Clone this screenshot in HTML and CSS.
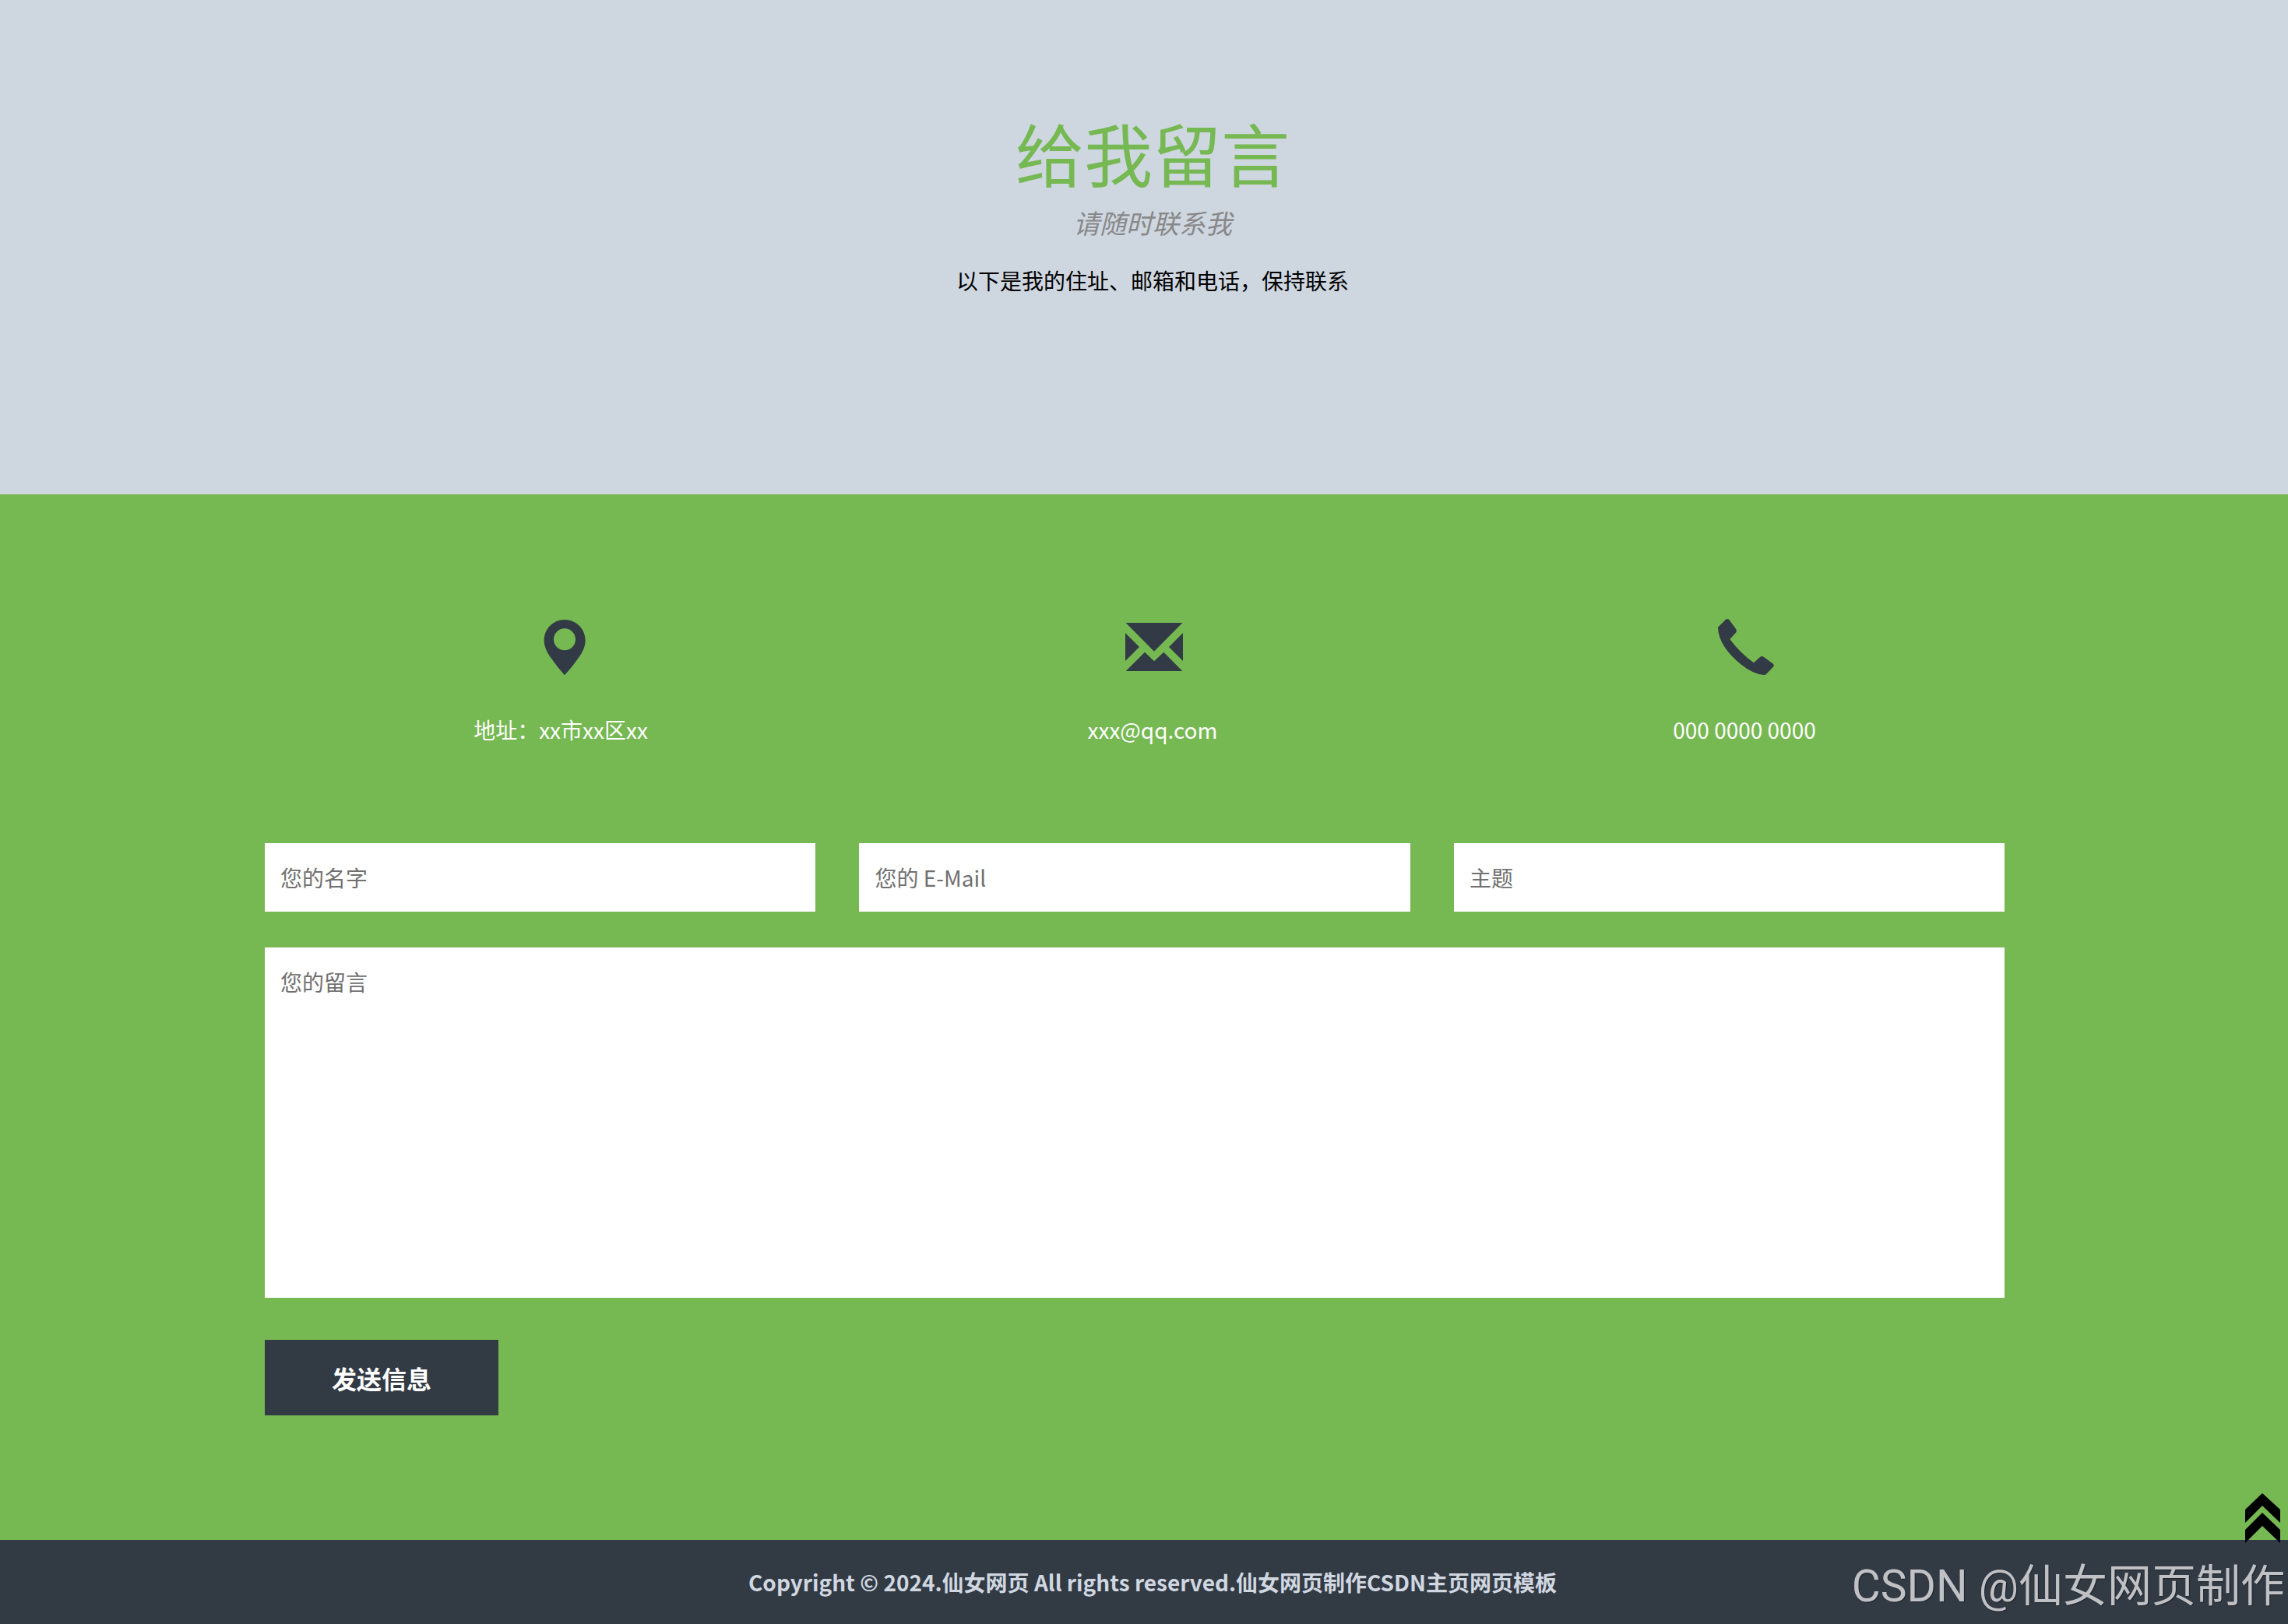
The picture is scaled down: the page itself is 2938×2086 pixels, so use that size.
FILE: index.html
```
<!DOCTYPE html>
<html lang="zh-CN">
<head>
<meta charset="UTF-8">
<meta name="viewport" content="width=device-width, initial-scale=1.0">
<title>给我留言</title>
<link rel="stylesheet" href="styles.css">
</head>
<body id="top">
<header class="intro">
    <div class="container">
        <h1>给我留言</h1>
        <h2>请随时联系我</h2>
        <p>以下是我的住址、邮箱和电话，保持联系</p>
    </div>
</header>

<main class="contact">
    <div class="container">
        <!-- Contact details -->
        <div class="details">
            <div class="detail">
                <svg class="icon" viewBox="294 60 252 252" aria-hidden="true">
                    <path fill-rule="evenodd" d="M435 78C479 78 515 113 515 158C515 182 503 205 488 226Q465 260 435 292Q406 260 383 226C368 205 356 182 356 158C356 113 391 78 435 78ZM435 112A42 42 0 1 0 435 196A42 42 0 1 0 435 112Z"/>
                </svg>
                <p>地址：xx市xx区xx</p>
            </div>
            <div class="detail">
                <svg class="icon" viewBox="234 60 252 252" aria-hidden="true">
                    <path d="M257 90H475L366 200ZM255 129L309 183L255 237ZM477 129L423 183L477 237ZM257 276L330 203L366 238L403 203L475 276Z"/>
                </svg>
                <p>xxx@qq.com</p>
            </div>
            <div class="detail">
                <svg class="icon" viewBox="234 60 252 252" aria-hidden="true">
                    <path d="M258 107L288 77Q295 72 301 78L328 115Q332 121 328 127L304 153Q342 205 396 244L420 222Q427 216 434 221L471 248Q476 253 472 259L443 289Q440 291 436 291Q396 289 348 251Q260 180 258 107Z"/>
                </svg>
                <p>000 0000 0000</p>
            </div>
        </div>

        <!-- Message form -->
        <form class="message-form">
            <div class="fields">
                <input type="text" name="name" placeholder="您的名字" aria-label="您的名字">
                <input type="email" name="email" placeholder="您的 E-Mail" aria-label="您的 E-Mail">
                <input type="text" name="subject" placeholder="主题" aria-label="主题">
            </div>
            <textarea name="message" placeholder="您的留言" aria-label="您的留言"></textarea>
            <button type="submit">发送信息</button>
        </form>
    </div>
</main>

<footer class="footer">
    <div class="container">
        <p>Copyright © 2024.仙女网页 All rights reserved.仙女网页制作CSDN主页网页模板</p>
    </div>
    <span class="watermark">CSDN @仙女网页制作</span>
</footer>

<a class="to-top" href="#top" aria-label="返回顶部">
    <svg viewBox="0 0 45 64" aria-hidden="true">
        <path d="M0 21L22 0L45 21V38L22 16L0 38ZM0 47L22 25L45 47V64L22 42L0 64Z"/>
    </svg>
</a>
</body>
</html>
```
FILE: styles.css
```
* {
    box-sizing: border-box;
}
body {
    margin: 0;
    font-family: "Noto Sans CJK SC", sans-serif;
    font-size: 28px;
    line-height: 40px;
    background-color: #76b852;
}
h1,
h2,
p {
    margin: 0;
}
.container {
    box-sizing: content-box;
    max-width: 2280px;
    margin: 0 auto;
    padding-left: 22px;
}

/* Intro */
.intro {
    padding: 147px 0 255px;
    background-color: #ced6e0;
    text-align: center;
}
.intro h1 {
    margin-bottom: 19px;
    font-size: 88px;
    font-weight: normal;
    line-height: 96px;
    color: #76b852;
}
.intro h2 {
    margin-bottom: 30px;
    font-size: 34px;
    font-weight: normal;
    font-style: italic;
    line-height: 48px;
    color: #888;
}
.intro p {
    color: #000;
}

/* Contact */
.contact {
    padding: 155px 0 160px;
    background-color: #76b852;
}
.details {
    display: grid;
    grid-template-columns: repeat(3, 1fr);
    margin-bottom: 126px;
    text-align: center;
    color: #fff;
}
.icon {
    display: block;
    width: 84px;
    height: 84px;
    margin: 0 auto 43px;
    fill: #323a45;
}
.message-form {
    width: 98%;
}
.fields {
    display: grid;
    grid-template-columns: repeat(3, 1fr);
    gap: 56px;
    margin-bottom: 46px;
}
input,
textarea {
    display: block;
    width: 100%;
    padding: 24px 20px;
    border: none;
    border-radius: 0;
    background-color: #fff;
    font-family: inherit;
    font-size: 28px;
    line-height: 40px;
}
input {
    height: 88px;
}
input::placeholder,
textarea::placeholder {
    color: #707070;
}
textarea {
    height: 450px;
    margin-bottom: 54px;
    resize: none;
}
button {
    display: block;
    width: 300px;
    height: 97px;
    border: none;
    background-color: #323a44;
    color: #fff;
    font-family: inherit;
    font-size: 32px;
    font-weight: bold;
    cursor: pointer;
}

/* Footer */
.footer {
    position: relative;
    padding: 34px 0;
    background-color: #323a44;
    text-align: center;
    font-weight: bold;
    color: #d0d7e0;
}
.watermark {
    position: absolute;
    right: 4px;
    bottom: 16px;
    font-family: Roboto, "Noto Sans CJK SC", sans-serif;
    font-size: 57px;
    font-weight: normal;
    line-height: 64px;
    color: #c0c1c4;
    text-shadow: 1px 1px 1px rgba(0, 0, 0, 0.4);
}
.to-top {
    position: fixed;
    right: 10px;
    bottom: 104px;
}
.to-top svg {
    display: block;
    width: 45px;
    height: 64px;
    fill: #000;
}
```
